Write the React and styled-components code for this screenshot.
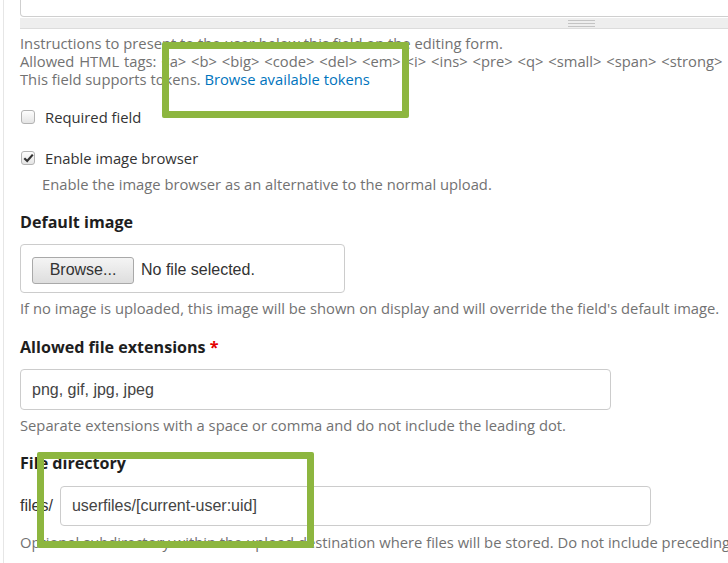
import React from "react";
import styled, { createGlobalStyle } from "styled-components";

const Global = createGlobalStyle`
  html, body { margin: 0; padding: 0; background: #fff; overflow: hidden; }
  body { font-family: "Open Sans", "Liberation Sans", sans-serif; color: #333; }
`;

const Stage = styled.div`
  position: relative;
  width: 728px;
  height: 563px;
  overflow: hidden;
`;

const Page = styled.div`
  margin-left: 3px;
  border-left: 1px solid #e6e6e6;
  padding-left: 16px;
  min-height: 563px;
`;

const TextareaStub = styled.div`
  width: 1120px;
  height: 16px;
  border: 1px solid #cfcfcf;
  border-top: none;
  border-radius: 0 0 4px 4px;
  background: #fff;
`;

const Grippie = styled.div`
  width: 1122px;
  height: 10px;
  margin-top: 1px;
  background: #eeeeee;
  border-bottom: 1px solid #dcdcdc;
  display: flex;
  justify-content: center;
  align-items: center;
`;

const GrippieLines = styled.div`
  width: 27px;
  height: 5px;
  border-top: 1px solid #c4c4c4;
  border-bottom: 1px solid #c4c4c4;
  &::after {
    content: "";
    display: block;
    margin-top: 2px;
    border-top: 1px solid #c4c4c4;
  }
`;

const Description = styled.div`
  font-size: 14.75px;
  line-height: 18px;
  color: #727272;
  white-space: nowrap;
  margin-top: ${(p) => p.$mt || 6}px;
  padding-left: ${(p) => p.$indent || 0}px;
`;

const TagLine = styled.div`
  word-spacing: 1px;
`;

const Link = styled.a`
  color: #0074bd;
  text-decoration: none;
`;

const CheckRow = styled.label`
  display: flex;
  align-items: center;
  gap: 10px;
  height: 18px;
  margin-top: ${(p) => p.$mt}px;
  font-size: 14.8px;
  color: #333;
  padding-left: 1px;
`;

const Box = styled.span`
  width: 14px;
  height: 14px;
  box-sizing: border-box;
  border: 1px solid #b3b3b3;
  border-radius: 3px;
  background: linear-gradient(#fdfdfd, #e4e4e4);
  display: flex;
  align-items: center;
  justify-content: center;
`;

const Heading = styled.div`
  font-size: 16.1px;
  font-weight: 700;
  line-height: 20px;
  color: #1e1e1e;
  margin-top: ${(p) => p.$mt}px;
`;

const Required = styled.span`
  color: #e30000;
`;

const FileBox = styled.div`
  width: 325px;
  height: 49px;
  box-sizing: border-box;
  margin-top: 12px;
  border: 1px solid #cccccc;
  border-radius: 4px;
  display: flex;
  align-items: center;
  padding: 3px 11px 0;
  gap: 7px;
  font-family: "Liberation Sans", Arial, sans-serif;
  font-size: 16px;
  color: #333;
`;

const BrowseButton = styled.span`
  width: 102px;
  height: 27px;
  box-sizing: border-box;
  border: 1px solid #a9a9a9;
  border-radius: 3px;
  background: linear-gradient(#f4f4f4, #dedede);
  display: flex;
  align-items: center;
  justify-content: center;
  color: #333;
`;

const TextInput = styled.div`
  width: ${(p) => p.$w}px;
  height: ${(p) => p.$h}px;
  box-sizing: border-box;
  border: 1px solid #cccccc;
  border-radius: 4px;
  display: flex;
  align-items: center;
  padding-left: 11px;
  font-family: "Liberation Sans", Arial, sans-serif;
  font-size: 16px;
  color: #444;
`;

const FieldGap = styled.div`
  margin-top: ${(p) => p.$mt}px;
`;

const PrefixRow = styled.div`
  display: flex;
  align-items: center;
  margin-top: 13px;
  gap: 7px;
  font-family: "Liberation Sans", Arial, sans-serif;
  font-size: 16px;
  color: #333;
`;

const Highlight = styled.div`
  position: absolute;
  left: ${(p) => p.$x}px;
  top: ${(p) => p.$y}px;
  width: ${(p) => p.$w}px;
  height: ${(p) => p.$h}px;
  box-sizing: border-box;
  border: 7px solid #8db63f;
  border-radius: 2px;
`;

const Check = () => (
  <svg width="11" height="10" viewBox="0 0 11 10">
    <path d="M1.3 5.2 L4.2 8 L9.8 1.6" fill="none" stroke="#333" strokeWidth="2.2" />
  </svg>
);

export default function App() {
  return (
    <Stage>
      <Global />
      <Page>
        <TextareaStub />
        <Grippie>
          <GrippieLines />
        </Grippie>
        <Description $mt={5}>
          <div>Instructions to present to the user below this field on the editing form.</div>
          <TagLine>
            Allowed HTML tags: &lt;a&gt; &lt;b&gt; &lt;big&gt; &lt;code&gt; &lt;del&gt; &lt;em&gt; &lt;i&gt; &lt;ins&gt;
            &lt;pre&gt; &lt;q&gt; &lt;small&gt; &lt;span&gt; &lt;strong&gt;
          </TagLine>
          <div>
            This field supports tokens. <Link href="#">Browse available tokens</Link>
          </div>
        </Description>

        <CheckRow $mt={20}>
          <Box />
          Required field
        </CheckRow>

        <CheckRow $mt={23}>
          <Box>
            <Check />
          </Box>
          Enable image browser
        </CheckRow>
        <Description $mt={8} $indent={22}>
          Enable the image browser as an alternative to the normal upload.
        </Description>

        <Heading $mt={19}>Default image</Heading>
        <FileBox>
          <BrowseButton>Browse...</BrowseButton>
          No file selected.
        </FileBox>
        <Description $mt={6}>
          If no image is uploaded, this image will be shown on display and will override the field's default image.
        </Description>

        <Heading $mt={20}>
          Allowed file extensions <Required>*</Required>
        </Heading>
        <FieldGap $mt={12}>
          <TextInput $w={591} $h={41}>png, gif, jpg, jpeg</TextInput>
        </FieldGap>
        <Description $mt={6}>
          Separate extensions with a space or comma and do not include the leading dot.
        </Description>

        <Heading $mt={19}>File directory</Heading>
        <PrefixRow>
          <span>files/</span>
          <TextInput $w={591} $h={40}>userfiles/[current-user:uid]</TextInput>
        </PrefixRow>
        <Description $mt={7}>
          Optional subdirectory within the upload destination where files will be stored. Do not include preceding
        </Description>
      </Page>
      <Highlight $x={162} $y={42} $w={247} $h={76} />
      <Highlight $x={37} $y={452} $w={277} $h={96} />
    </Stage>
  );
}
